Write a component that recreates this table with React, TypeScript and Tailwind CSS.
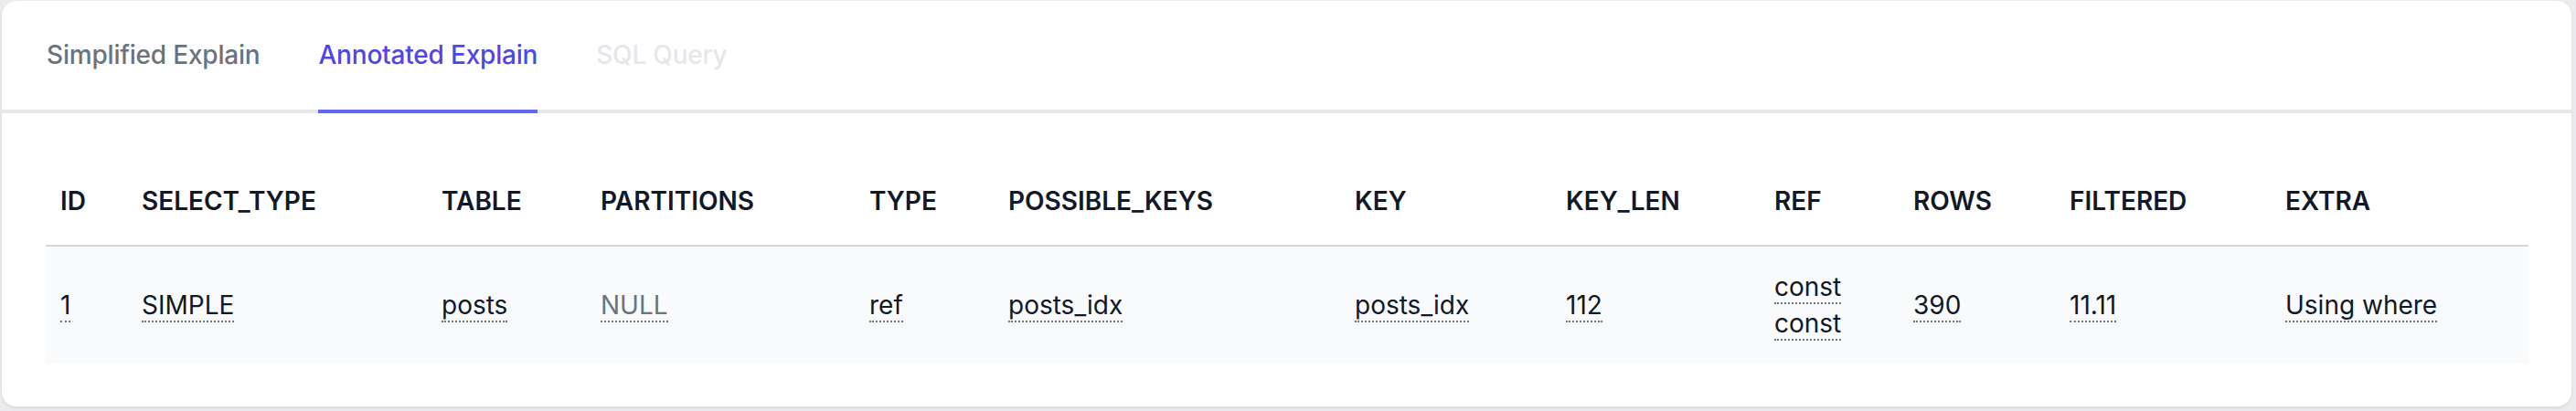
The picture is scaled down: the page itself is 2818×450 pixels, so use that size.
import React from "react";

type Cell = { lines: string[]; muted?: boolean };

const columns = [
  { label: "ID", width: "w-[89px]" },
  { label: "SELECT_TYPE", width: "w-[328px]" },
  { label: "TABLE", width: "w-[174px]" },
  { label: "PARTITIONS", width: "w-[294px]" },
  { label: "TYPE", width: "w-[152px]" },
  { label: "POSSIBLE_KEYS", width: "w-[379px]" },
  { label: "KEY", width: "w-[231px]" },
  { label: "KEY_LEN", width: "w-[228px]" },
  { label: "REF", width: "w-[152px]" },
  { label: "ROWS", width: "w-[171px]" },
  { label: "FILTERED", width: "w-[236px]" },
  { label: "EXTRA", width: "w-[282px]" },
];

const row: Cell[] = [
  { lines: ["1"] },
  { lines: ["SIMPLE"] },
  { lines: ["posts"] },
  { lines: ["NULL"], muted: true },
  { lines: ["ref"] },
  { lines: ["posts_idx"] },
  { lines: ["posts_idx"] },
  { lines: ["112"] },
  { lines: ["const", "const"] },
  { lines: ["390"] },
  { lines: ["11.11"] },
  { lines: ["Using where"] },
];

const tabs = [
  { label: "Simplified Explain", state: "idle" },
  { label: "Annotated Explain", state: "active" },
  { label: "SQL Query", state: "disabled" },
];

export default function App() {
  return (
    <div className="h-[450px] overflow-hidden bg-[#ececee] pl-[2px] pr-[5px] pt-[1px] font-['Inter',sans-serif]">
      <div className="rounded-[16px] bg-white shadow-[0_2px_4px_rgba(0,0,0,0.08)]">
        {/* tabs */}
        <nav className="flex gap-[64px] border-b-4 border-[#e5e7eb] pl-[49px] pt-[39px]">
          {tabs.map((t) => (
            <button
              key={t.label}
              type="button"
              className={
                t.state === "active"
                  ? "-mb-[4px] border-b-4 border-[#6366f1] pb-[40px] text-[28px] leading-[40px] font-medium tracking-[-0.2px] text-[#4f46e5]"
                  : t.state === "disabled"
                    ? "-mb-[4px] border-b-4 border-transparent pb-[40px] text-[28px] leading-[40px] font-medium tracking-[-0.2px] text-[#e5e7eb]"
                    : "-mb-[4px] border-b-4 border-transparent pb-[40px] text-[28px] leading-[40px] font-medium tracking-[-0.2px] text-[#6b7280]"
              }
            >
              {t.label}
            </button>
          ))}
        </nav>

        {/* annotated explain table */}
        <div className="p-[48px] pb-[47px]">
          <table className="w-full table-fixed text-left">
            <colgroup>
              {columns.map((c) => (
                <col key={c.label} className={c.width} />
              ))}
            </colgroup>
            <thead className="border-b-2 border-[#d1d5db]">
              <tr>
                {columns.map((c) => (
                  <th
                    key={c.label}
                    className="py-[28px] pl-[16px] text-[28px] leading-[40px] font-semibold text-[#111827]"
                  >
                    {c.label}
                  </th>
                ))}
              </tr>
            </thead>
            <tbody>
              <tr className="bg-[#f9fafb]">
                {row.map((cell, i) => (
                  <td
                    key={i}
                    className="py-[24px] pl-[16px] align-middle text-[28px] leading-[40px] whitespace-nowrap"
                  >
                    {cell.lines.map((line, j) => (
                      <div key={j}>
                        <span
                          className={
                            cell.muted
                              ? "border-b-2 border-dotted border-[#6b7280] text-[#6b7280]"
                              : "border-b-2 border-dotted border-[#6b7280] text-[#111827]"
                          }
                        >
                          {line}
                        </span>
                      </div>
                    ))}
                  </td>
                ))}
              </tr>
            </tbody>
          </table>
        </div>
      </div>
    </div>
  );
}
